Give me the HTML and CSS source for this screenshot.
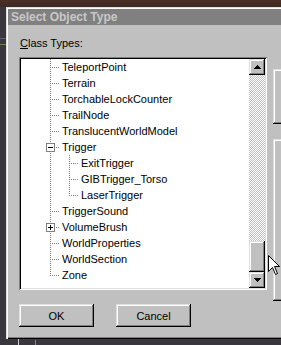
FILE: index.html
```html
<!DOCTYPE html>
<html lang="en">
<head>
    <meta charset="UTF-8">
    <title>Select Object Type</title>
    <link rel="stylesheet" href="styles.css">
</head>
<body>
    <div class="dialog">
        <div class="titlebar">Select Object Type</div>
        <div class="dialog-body">
            <div class="main-col">
                <div class="label"><u>C</u>lass Types:</div>
                <div class="listbox">
                    <div class="tree">
                        <div class="row"><span class="conn"></span><span class="text">TeleportPoint</span></div>
                        <div class="row"><span class="conn"></span><span class="text">Terrain</span></div>
                        <div class="row"><span class="conn"></span><span class="text">TorchableLockCounter</span></div>
                        <div class="row"><span class="conn"></span><span class="text">TrailNode</span></div>
                        <div class="row"><span class="conn"></span><span class="text">TranslucentWorldModel</span></div>
                        <div class="row"><span class="conn"><span class="box minus"></span></span><span class="text">Trigger</span></div>
                        <div class="row"><span class="guide"></span><span class="conn"></span><span class="text">ExitTrigger</span></div>
                        <div class="row"><span class="guide"></span><span class="conn"></span><span class="text">GIBTrigger_Torso</span></div>
                        <div class="row"><span class="guide"></span><span class="conn last"></span><span class="text">LaserTrigger</span></div>
                        <div class="row"><span class="conn"></span><span class="text">TriggerSound</span></div>
                        <div class="row"><span class="conn"><span class="box plus"></span></span><span class="text">VolumeBrush</span></div>
                        <div class="row"><span class="conn"></span><span class="text">WorldProperties</span></div>
                        <div class="row"><span class="conn"></span><span class="text">WorldSection</span></div>
                        <div class="row"><span class="conn last"></span><span class="text">Zone</span></div>
                    </div>
                    <div class="scrollbar">
                        <div class="sb-btn">
                            <svg width="7" height="4" viewBox="0 0 7 4"><path d="M3 0h1v1h1v1h1v1h1v1H0V3h1V2h1V1h1z" fill="#000"/></svg>
                        </div>
                        <div class="sb-track"></div>
                        <div class="sb-thumb"></div>
                        <div class="sb-btn">
                            <svg width="7" height="4" viewBox="0 0 7 4"><path d="M0 0h7v1H6v1H5v1H4v1H3V3H2V2H1V1H0z" fill="#000"/></svg>
                        </div>
                    </div>
                </div>
                <div class="buttons">
                    <button type="button" class="btn">OK</button>
                    <button type="button" class="btn">Cancel</button>
                </div>
            </div>
            <div class="side-col">
                <div class="side-box first"></div>
                <div class="side-box second"></div>
            </div>
        </div>
    </div>

    <svg class="cursor" width="12" height="20" viewBox="0 0 12 20">
        <path d="M0.5 0.5V16.5L4.5 12.5L7.5 19.5L9.5 18.5L6.5 11.5H11.5Z" fill="#fff" stroke="#000" stroke-width="1"/>
    </svg>
</body>
</html>
```

FILE: styles.css
```css
html, body {
    margin: 0;
    padding: 0;
}
body {
    width: 281px;
    height: 345px;
    overflow: hidden;
    position: relative;
    font-family: "Liberation Sans", Arial, sans-serif;
    font-size: 11px;
    color: #000;
    background:
        linear-gradient(#4a2f27, #3e2a24) 0 0 / 100% 7px no-repeat,
        linear-gradient(#5b8a4a, #5b8a4a) 0 44px / 6px 1px no-repeat,
        linear-gradient(#6a5a80, #6a5a80) 0 38px / 6px 1px no-repeat,
        linear-gradient(#cfcfcf, #cfcfcf) 18px 339px / 1px 6px no-repeat,
        linear-gradient(#4aa0a0, #4aa0a0) 35px 340px / 1px 5px no-repeat,
        #3a383e;
}
.dialog {
    margin: 7px 0 0 6px;
    width: 275px;
    height: 332px;
    box-sizing: border-box;
    padding: 2px 0 0 2px;
    background-color: #c0c0c0;
    box-shadow: inset 1px 1px #dfdfdf, inset 2px 2px #fff, inset 0 -1px #000, inset 0 -2px #808080;
}
.titlebar {
    height: 16px;
    line-height: 16px;
    padding-left: 3px;
    background-color: #808080;
    color: #c8c8c8;
    font-size: 12px;
    font-weight: bold;
}
.dialog-body {
    display: flex;
    padding: 12px 0 0 11px;
}
.main-col {
    width: 248px;
    flex: none;
}
.label {
    height: 13px;
    line-height: 13px;
    margin-bottom: 7px;
    padding-left: 1px;
}
.listbox {
    display: flex;
    height: 233px;
    box-sizing: border-box;
    padding: 2px;
    background-color: #fff;
    box-shadow: inset 1px 1px #808080, inset -1px -1px #fff, inset 2px 2px #000, inset -2px -2px #dfdfdf;
}
.tree {
    flex: 1;
    padding-left: 29px;
    background-color: #fff;
}
.row {
    display: flex;
    align-items: center;
    height: 16px;
    white-space: nowrap;
}
.text {
    padding-left: 2px;
    line-height: 16px;
}
.conn, .guide {
    flex: none;
    height: 16px;
    display: flex;
    align-items: center;
}
.conn {
    width: 10px;
    background:
        repeating-linear-gradient(to bottom, #808080 0 1px, transparent 1px 2px) 0 0 / 1px 100% no-repeat,
        repeating-linear-gradient(to right, #808080 0 1px, transparent 1px 2px) 0 8px / 100% 1px no-repeat;
}
.conn.last {
    background:
        repeating-linear-gradient(to bottom, #808080 0 1px, transparent 1px 2px) 0 0 / 1px 9px no-repeat,
        repeating-linear-gradient(to right, #808080 0 1px, transparent 1px 2px) 0 8px / 100% 1px no-repeat;
}
.guide {
    width: 19px;
    background: repeating-linear-gradient(to bottom, #808080 0 1px, transparent 1px 2px) 0 0 / 1px 100% no-repeat;
}
.box {
    display: grid;
    place-items: center;
    width: 9px;
    height: 9px;
    box-sizing: border-box;
    margin-left: -4px;
    margin-top: 1px;
    border: 1px solid #808080;
    background-color: #fff;
}
.box::before, .box::after {
    content: "";
    grid-area: 1 / 1;
    background-color: #000;
}
.box::before {
    width: 5px;
    height: 1px;
}
.box.plus::after {
    width: 1px;
    height: 5px;
}
.scrollbar {
    width: 16px;
    flex: none;
    display: flex;
    flex-direction: column;
}
.sb-btn, .sb-thumb, .btn, .side-box {
    background-color: #c0c0c0;
    box-shadow: inset -1px -1px #000, inset 1px 1px #dfdfdf, inset -2px -2px #808080, inset 2px 2px #fff;
}
.sb-btn {
    height: 16px;
    display: flex;
    align-items: center;
    justify-content: center;
}
.sb-btn svg {
    display: block;
}
.sb-track {
    flex: 1;
    background: repeating-conic-gradient(#c0c0c0 0 25%, #fff 0 50%) 0 0 / 2px 2px;
}
.sb-thumb {
    height: 31px;
}
.buttons {
    display: flex;
    gap: 22px;
    margin-top: 14px;
}
.btn {
    width: 75px;
    height: 23px;
    border: none;
    padding: 0;
    font-family: "Liberation Sans", Arial, sans-serif;
    font-size: 11px;
    color: #000;
}
.side-col {
    flex: 1;
    min-width: 0;
    overflow: hidden;
    margin-left: 6px;
    padding-top: 32px;
    display: flex;
    flex-direction: column;
    gap: 15px;
}
.side-box {
    width: 40px;
    flex: none;
}
.side-box.first {
    height: 55px;
}
.side-box.second {
    height: 162px;
}
.cursor {
    position: absolute;
    left: 268px;
    top: 255px;
}
```
